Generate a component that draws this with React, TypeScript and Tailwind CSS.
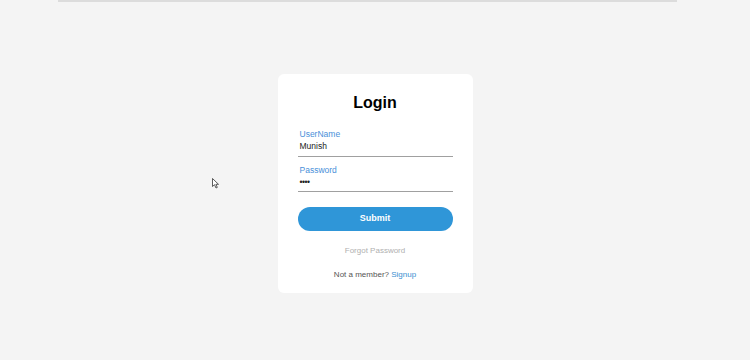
import React from "react";

export default function App() {
  return (
    <div
      className="relative w-[750px] h-[360px] bg-[#f4f4f4] overflow-hidden"
      style={{ fontFamily: '"Liberation Sans", Arial, sans-serif' }}
    >
      <div className="absolute left-[58px] top-0 w-[619px] h-[2px] bg-[#dcdcdc]" />
      <div className="flex justify-center pt-[74px]">
        <div className="w-[195px] h-[219px] bg-white rounded-[6px] px-[20px] pt-[19px] flex flex-col">
          <h1 className="text-center font-bold text-[16px] leading-[20px] text-black">Login</h1>
          <div className="mt-[16px] flex flex-col px-[2px]">
            <label className="text-[8.5px] leading-[11px] text-[#4a90d9]">UserName</label>
            <div className="text-[8.5px] leading-[11px] text-[#222] mt-[1px]">Munish</div>
          </div>
          <div className="h-[1px] bg-[#a0a0a0] mt-[4px]" />
          <div className="mt-[8px] flex flex-col px-[2px]">
            <label className="text-[8.5px] leading-[11px] text-[#4a90d9]">Password</label>
            <div className="text-[8.5px] leading-[11px] text-[#222] mt-[1px] tracking-[-0.5px]">••••</div>
          </div>
          <div className="h-[1px] bg-[#a0a0a0] mt-[3px]" />
          <button className="mt-[15px] h-[24px] w-full rounded-full bg-[#2f96d8] text-white font-bold text-[9px]">
            Submit
          </button>
          <div className="mt-[15px] text-center text-[8px] leading-[10px] text-[#b0b0b0]">Forgot Password</div>
          <div className="mt-[14px] text-center text-[8px] leading-[10px] text-[#555]">
            Not a member? <span className="text-[#3a8fd0]">Signup</span>
          </div>
        </div>
      </div>
      <svg className="absolute left-[212px] top-[178px]" width="8" height="11" viewBox="0 0 8 11">
        <path d="M0.5 0.5 L0.5 8.5 L2.5 6.7 L4 10 L5.3 9.4 L3.9 6.3 L6.5 6.3 Z" fill="#fff" stroke="#333" strokeWidth="0.8" />
      </svg>
    </div>
  );
}
